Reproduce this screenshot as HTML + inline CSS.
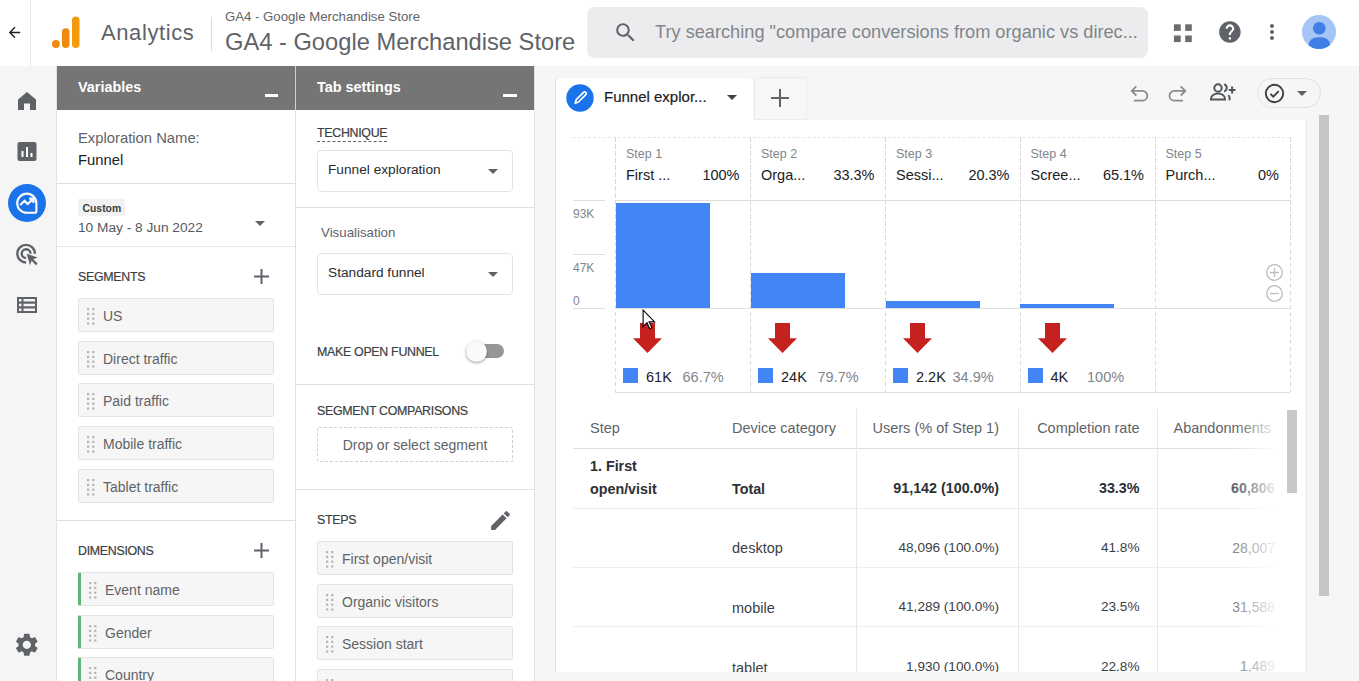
<!DOCTYPE html>
<html><head><meta charset="utf-8">
<style>
*{box-sizing:border-box;margin:0;padding:0}
html,body{width:1359px;height:681px;overflow:hidden;background:#fff;font-family:"Liberation Sans",sans-serif;color:#202124}
.a{position:absolute}
svg{display:block}
/* header */
#hdr{left:0;top:0;width:1359px;height:66px;background:#fff}
#rail{left:0;top:66px;width:57px;height:615px;background:#f5f5f5;border-right:1px solid #e3e3e3}
.ph{background:#757575;color:#fff;font-weight:bold;font-size:14.4px;height:44px;top:66px}
.panel{top:66px;height:615px;background:#fff}
.lbl{font-size:12.4px;color:#3c4043;letter-spacing:-0.3px;-webkit-text-stroke:0.2px #3c4043}
.chip{background:#f6f6f6;border:1px solid #e3e3e3;border-radius:2px;height:34px;font-size:14px;color:#5f6368}
.grip{position:absolute;left:8.1px;top:8.5px}
.sel{border:1px solid #e3e3e3;border-radius:4px;height:42px;font-size:13.7px;color:#2a2c30;background:#fff}
.tri{width:0;height:0;border-left:5px solid transparent;border-right:5px solid transparent;border-top:5px solid #5f6368}
#canvas{left:535px;top:66px;width:824px;height:615px;background:#f6f6f6}
</style></head><body>
<!-- HEADER -->
<div id="hdr" class="a">
  <div class="a" style="left:30px;top:0;width:1px;height:66px;background:#e8eaed"></div>
  <svg class="a" style="left:6px;top:24px" width="17" height="17" viewBox="0 0 24 24"><path d="M20 11H7.83l5.59-5.59L12 4l-8 8 8 8 1.41-1.41L7.83 13H20v-2z" fill="#202124"/></svg>
  <svg class="a" style="left:52px;top:16px" width="28" height="32" viewBox="0 0 28 32">
    <rect x="20" y="0.5" width="7.5" height="31.5" rx="3.75" fill="#f39a0b"/>
    <rect x="10" y="12.3" width="7.5" height="19.7" rx="3.75" fill="#ee8a0e"/>
    <circle cx="3.9" cy="28" r="3.9" fill="#ee8a0e"/>
  </svg>
  <div class="a" style="left:101px;top:20px;font-size:22px;color:#5f6368;letter-spacing:0.6px">Analytics</div>
  <div class="a" style="left:211px;top:17px;width:1px;height:34px;background:#dadce0"></div>
  <div class="a" style="left:225px;top:9px;font-size:13.2px;color:#5f6368">GA4 - Google Merchandise Store</div>
  <div class="a" style="left:225px;top:29.3px;font-size:23.7px;color:#5f6368">GA4 - Google Merchandise Store</div>
  <div class="a" style="left:587px;top:7px;width:561px;height:51px;background:#ececee;border-radius:8px"></div>
  <svg class="a" style="left:612.5px;top:19.8px" width="25.2" height="25.2" viewBox="0 0 24 24"><path d="M15.5 14h-.79l-.28-.27A6.47 6.47 0 0 0 16 9.5 6.5 6.5 0 1 0 9.5 16c1.61 0 3.09-.59 4.23-1.57l.27.28v.79l5 4.99L20.49 19l-4.99-5zm-6 0C7.01 14 5 11.99 5 9.5S7.01 5 9.5 5 14 7.01 14 9.5 11.99 14 9.5 14z" fill="#5f6368"/></svg>
  <div class="a" style="left:655px;top:21.5px;font-size:18.2px;color:#80868b;white-space:nowrap">Try searching "compare conversions from organic vs direc...</div>
  <svg class="a" style="left:1173px;top:23px" width="20" height="20" viewBox="0 0 20 20" fill="#6d6d6d"><rect x="0.9" y="1.3" width="6.8" height="6.6"/><rect x="12.2" y="1.3" width="6.6" height="6.6"/><rect x="0.9" y="12.5" width="6.8" height="6.6"/><rect x="12.2" y="12.5" width="6.6" height="6.6"/></svg>
  <svg class="a" style="left:1216.9px;top:19.1px" width="25.8" height="25.8" viewBox="0 0 24 24"><path d="M12 2C6.48 2 2 6.48 2 12s4.48 10 10 10 10-4.48 10-10S17.52 2 12 2zm1 17h-2v-2h2v2zm2.07-7.75l-.9.92C13.45 12.9 13 13.5 13 15h-2v-.5c0-1.1.45-2.1 1.17-2.83l1.24-1.26c.37-.36.59-.86.59-1.41 0-1.1-.9-2-2-2s-2 .9-2 2H8c0-2.21 1.79-4 4-4s4 1.79 4 4c0 .88-.36 1.68-.93 2.25z" fill="#5f6368"/></svg>
  <svg class="a" style="left:1260px;top:20px" width="24" height="24" viewBox="0 0 24 24"><path d="M12 8c1.1 0 2-.9 2-2s-.9-2-2-2-2 .9-2 2 .9 2 2 2zm0 2c-1.1 0-2 .9-2 2s.9 2 2 2 2-.9 2-2-.9-2-2-2zm0 6c-1.1 0-2 .9-2 2s.9 2 2 2 2-.9 2-2-.9-2-2-2z" fill="#5f6368"/></svg>
  <svg class="a" style="left:1302px;top:15px" width="34" height="34" viewBox="0 0 34 34">
    <defs><clipPath id="avc"><circle cx="17" cy="17" r="17"/></clipPath></defs>
    <circle cx="17" cy="17" r="17" fill="#a6c5f7"/>
    <g clip-path="url(#avc)" fill="#3f7fe6"><circle cx="17.3" cy="13.3" r="6.3"/><rect x="6.6" y="22.2" width="21.6" height="16" rx="9"/></g>
  </svg>
</div>

<!-- RAIL -->
<div id="rail" class="a">
  <svg class="a" style="left:15px;top:23px" width="24" height="24" viewBox="0 0 24 24"><path d="M12 3L3 10.5V21h6v-6.5h6V21h6V10.5z" fill="#5f6368"/></svg>
  <svg class="a" style="left:17px;top:76px" width="20" height="20" viewBox="0 0 20 20"><rect x="0.5" y="0" width="19" height="19" rx="2" fill="#5f6368"/><rect x="4.5" y="9" width="2" height="6" fill="#fff"/><rect x="9" y="5" width="2" height="10" fill="#fff"/><rect x="13.5" y="11" width="2" height="4" fill="#fff"/></svg>
  <svg class="a" style="left:8px;top:118px" width="38" height="38" viewBox="0 0 38 38"><circle cx="19" cy="19" r="19" fill="#1a73e8"/><path d="M18.8 28.8A9.6 9.6 0 1 1 28.4 19.2V27a1.8 1.8 0 0 1-1.8 1.8Z" fill="none" stroke="#fff" stroke-width="2.1"/><path d="M12.2 20.9L16.6 16.8L19.6 20L25.2 14.9M21.2 14.6H25.5V18.9" fill="none" stroke="#fff" stroke-width="2.1"/></svg>
  <svg class="a" style="left:13.8px;top:175px" width="26.4" height="26.4" viewBox="0 0 24 24"><path d="M11 3.5a8 8 0 1 0 0 16" fill="none" stroke="#5f6368" stroke-width="2.2"/><path d="M19 11.5a8 8 0 0 0-8-8" fill="none" stroke="#5f6368" stroke-width="2.2"/><path d="M11 15.5a4 4 0 1 1 4-4" fill="none" stroke="#5f6368" stroke-width="2.2"/><path d="M11.5 11.5l10 3.5-4 1.5 4 4-1.5 1.5-4-4-1.5 4z" fill="#5f6368"/></svg>
  <svg class="a" style="left:17px;top:231px" width="20" height="16" viewBox="0 0 20 16"><path d="M0 0h20v16H0z M2 2v2.5h2.5V2z M6.5 2v2.5H18V2z M2 6.75v2.5h2.5v-2.5z M6.5 6.75v2.5H18v-2.5z M2 11.5V14h2.5v-2.5z M6.5 11.5V14H18v-2.5z" fill="#5f6368" fill-rule="evenodd"/></svg>
  <svg class="a" style="left:13.2px;top:564.5px" width="27.6" height="27.6" viewBox="0 0 24 24"><path d="M19.14 12.94c.04-.3.06-.61.06-.94 0-.32-.02-.64-.07-.94l2.03-1.58a.49.49 0 0 0 .12-.61l-1.92-3.32a.488.488 0 0 0-.59-.22l-2.39.96c-.5-.38-1.03-.7-1.62-.94l-.36-2.54a.484.484 0 0 0-.48-.41h-3.84c-.24 0-.43.17-.47.41l-.36 2.54c-.59.24-1.13.57-1.62.94l-2.39-.96c-.22-.08-.47 0-.59.22L2.74 8.87c-.12.21-.08.47.12.61l2.03 1.58c-.05.3-.09.63-.09.94s.02.64.07.94l-2.03 1.58a.49.49 0 0 0-.12.61l1.92 3.32c.12.22.37.29.59.22l2.39-.96c.5.38 1.03.7 1.62.94l.36 2.54c.05.24.24.41.48.41h3.84c.24 0 .44-.17.47-.41l.36-2.54c.59-.24 1.13-.56 1.62-.94l2.39.96c.22.08.47 0 .59-.22l1.92-3.32c.12-.22.07-.47-.12-.61l-2.01-1.58zM12 15.6c-1.98 0-3.6-1.62-3.6-3.6s1.62-3.6 3.6-3.6 3.6 1.62 3.6 3.6-1.62 3.6-3.6 3.6z" fill="#5f6368"/></svg>
</div>

<!-- PANEL 1 -->
<div class="a panel" style="left:57px;width:239px;border-right:1px solid #e0e0e0">
  <div class="a" style="left:21px;top:64px;font-size:14.8px;color:#5f6368">Exploration Name:</div>
  <div class="a" style="left:21px;top:85.5px;font-size:14.8px;color:#202124">Funnel</div>
  <div class="a" style="left:0;top:117px;width:238px;height:1px;background:#e0e0e0"></div>
  <div class="a" style="left:21px;top:133px;width:47px;height:17px;background:#f1f1f1;font-size:10.4px;font-weight:bold;color:#3c4043;padding:3.5px 0 0 4.5px">Custom</div>
  <div class="a" style="left:21px;top:153.5px;font-size:13.7px;color:#55595e">10 May - 8 Jun 2022</div>
  <div class="a tri" style="left:198px;top:155px"></div>
  <div class="a" style="left:0;top:180px;width:238px;height:1px;background:#e8e8e8"></div>
  <div class="a lbl" style="left:21px;top:204px">SEGMENTS</div>
  <svg class="a" style="left:197px;top:203px" width="15" height="15" viewBox="0 0 15 15"><path d="M7.5 0v15M0 7.5h15" stroke="#5f6368" stroke-width="2"/></svg>
  <div class="a chip" style="left:21px;top:232px;width:196px"><svg class="grip" width="8" height="17" viewBox="0 0 8 17" fill="#b5b5b5"><rect x="0" y="0" width="2.2" height="2.2"/><rect x="0" y="4.8" width="2.2" height="2.2"/><rect x="0" y="9.6" width="2.2" height="2.2"/><rect x="0" y="14.4" width="2.2" height="2.2"/><rect x="5.15" y="0" width="2.2" height="2.2"/><rect x="5.15" y="4.8" width="2.2" height="2.2"/><rect x="5.15" y="9.6" width="2.2" height="2.2"/><rect x="5.15" y="14.4" width="2.2" height="2.2"/></svg><span class="a" style="left:24px;top:9px">US</span></div>
  <div class="a chip" style="left:21px;top:275px;width:196px"><svg class="grip" width="8" height="17" viewBox="0 0 8 17" fill="#b5b5b5"><rect x="0" y="0" width="2.2" height="2.2"/><rect x="0" y="4.8" width="2.2" height="2.2"/><rect x="0" y="9.6" width="2.2" height="2.2"/><rect x="0" y="14.4" width="2.2" height="2.2"/><rect x="5.15" y="0" width="2.2" height="2.2"/><rect x="5.15" y="4.8" width="2.2" height="2.2"/><rect x="5.15" y="9.6" width="2.2" height="2.2"/><rect x="5.15" y="14.4" width="2.2" height="2.2"/></svg><span class="a" style="left:24px;top:9px">Direct traffic</span></div>
  <div class="a chip" style="left:21px;top:317px;width:196px"><svg class="grip" width="8" height="17" viewBox="0 0 8 17" fill="#b5b5b5"><rect x="0" y="0" width="2.2" height="2.2"/><rect x="0" y="4.8" width="2.2" height="2.2"/><rect x="0" y="9.6" width="2.2" height="2.2"/><rect x="0" y="14.4" width="2.2" height="2.2"/><rect x="5.15" y="0" width="2.2" height="2.2"/><rect x="5.15" y="4.8" width="2.2" height="2.2"/><rect x="5.15" y="9.6" width="2.2" height="2.2"/><rect x="5.15" y="14.4" width="2.2" height="2.2"/></svg><span class="a" style="left:24px;top:9px">Paid traffic</span></div>
  <div class="a chip" style="left:21px;top:360px;width:196px"><svg class="grip" width="8" height="17" viewBox="0 0 8 17" fill="#b5b5b5"><rect x="0" y="0" width="2.2" height="2.2"/><rect x="0" y="4.8" width="2.2" height="2.2"/><rect x="0" y="9.6" width="2.2" height="2.2"/><rect x="0" y="14.4" width="2.2" height="2.2"/><rect x="5.15" y="0" width="2.2" height="2.2"/><rect x="5.15" y="4.8" width="2.2" height="2.2"/><rect x="5.15" y="9.6" width="2.2" height="2.2"/><rect x="5.15" y="14.4" width="2.2" height="2.2"/></svg><span class="a" style="left:24px;top:9px">Mobile traffic</span></div>
  <div class="a chip" style="left:21px;top:403px;width:196px"><svg class="grip" width="8" height="17" viewBox="0 0 8 17" fill="#b5b5b5"><rect x="0" y="0" width="2.2" height="2.2"/><rect x="0" y="4.8" width="2.2" height="2.2"/><rect x="0" y="9.6" width="2.2" height="2.2"/><rect x="0" y="14.4" width="2.2" height="2.2"/><rect x="5.15" y="0" width="2.2" height="2.2"/><rect x="5.15" y="4.8" width="2.2" height="2.2"/><rect x="5.15" y="9.6" width="2.2" height="2.2"/><rect x="5.15" y="14.4" width="2.2" height="2.2"/></svg><span class="a" style="left:24px;top:9px">Tablet traffic</span></div>
  <div class="a" style="left:0;top:454px;width:238px;height:1px;background:#e0e0e0"></div>
  <div class="a lbl" style="left:21px;top:478px">DIMENSIONS</div>
  <svg class="a" style="left:197px;top:477px" width="15" height="15" viewBox="0 0 15 15"><path d="M7.5 0v15M0 7.5h15" stroke="#5f6368" stroke-width="2"/></svg>
  <div class="a chip" style="left:21px;top:506px;width:196px;border-left:3px solid #5bb974"><svg class="grip" width="8" height="17" viewBox="0 0 8 17" fill="#b5b5b5"><rect x="0" y="0" width="2.2" height="2.2"/><rect x="0" y="4.8" width="2.2" height="2.2"/><rect x="0" y="9.6" width="2.2" height="2.2"/><rect x="0" y="14.4" width="2.2" height="2.2"/><rect x="5.15" y="0" width="2.2" height="2.2"/><rect x="5.15" y="4.8" width="2.2" height="2.2"/><rect x="5.15" y="9.6" width="2.2" height="2.2"/><rect x="5.15" y="14.4" width="2.2" height="2.2"/></svg><span class="a" style="left:24px;top:9px">Event name</span></div>
  <div class="a chip" style="left:21px;top:549px;width:196px;border-left:3px solid #5bb974"><svg class="grip" width="8" height="17" viewBox="0 0 8 17" fill="#b5b5b5"><rect x="0" y="0" width="2.2" height="2.2"/><rect x="0" y="4.8" width="2.2" height="2.2"/><rect x="0" y="9.6" width="2.2" height="2.2"/><rect x="0" y="14.4" width="2.2" height="2.2"/><rect x="5.15" y="0" width="2.2" height="2.2"/><rect x="5.15" y="4.8" width="2.2" height="2.2"/><rect x="5.15" y="9.6" width="2.2" height="2.2"/><rect x="5.15" y="14.4" width="2.2" height="2.2"/></svg><span class="a" style="left:24px;top:9px">Gender</span></div>
  <div class="a chip" style="left:21px;top:591px;width:196px;border-left:3px solid #5bb974"><svg class="grip" width="8" height="17" viewBox="0 0 8 17" fill="#b5b5b5"><rect x="0" y="0" width="2.2" height="2.2"/><rect x="0" y="4.8" width="2.2" height="2.2"/><rect x="0" y="9.6" width="2.2" height="2.2"/><rect x="0" y="14.4" width="2.2" height="2.2"/><rect x="5.15" y="0" width="2.2" height="2.2"/><rect x="5.15" y="4.8" width="2.2" height="2.2"/><rect x="5.15" y="9.6" width="2.2" height="2.2"/><rect x="5.15" y="14.4" width="2.2" height="2.2"/></svg><span class="a" style="left:24px;top:9px">Country</span></div>
</div>
<div class="a ph" style="left:57px;width:238px"><span class="a" style="left:21px;top:13px">Variables</span><div class="a" style="left:208px;top:27.5px;width:13px;height:3.5px;background:#fff"></div></div>

<div class="a" style="left:295px;top:66px;width:1px;height:44px;background:#d0d0d0"></div>
<!-- PANEL 2 -->
<div class="a panel" style="left:296px;width:239px;border-right:1px solid #e0e0e0">
  <div class="a lbl" style="left:21px;top:60px">TECHNIQUE</div>
  <div class="a" style="left:21px;top:75px;width:70px;height:0;border-top:1px dashed #5f6368"></div>
  <div class="a sel" style="left:21px;top:84px;width:196px"><span class="a" style="left:10px;top:11px">Funnel exploration</span><div class="a tri" style="left:170px;top:18px"></div></div>
  <div class="a" style="left:0;top:141px;width:238px;height:1px;background:#e0e0e0"></div>
  <div class="a" style="left:25px;top:159.2px;font-size:13.3px;color:#5f6368">Visualisation</div>
  <div class="a sel" style="left:21px;top:186.5px;width:196px;height:42.5px"><span class="a" style="left:10px;top:11.5px">Standard funnel</span><div class="a tri" style="left:170px;top:18px"></div></div>
  <div class="a lbl" style="left:21px;top:279px">MAKE OPEN FUNNEL</div>
  <div class="a" style="left:172px;top:278px;width:36px;height:14px;border-radius:7px;background:#979797"></div>
  <div class="a" style="left:170px;top:274.5px;width:21px;height:21px;border-radius:50%;background:#fafafa;box-shadow:0 1px 3px rgba(0,0,0,.4)"></div>
  <div class="a" style="left:0;top:318px;width:238px;height:1px;background:#e0e0e0"></div>
  <div class="a lbl" style="left:21px;top:338px">SEGMENT COMPARISONS</div>
  <div class="a" style="left:21px;top:361px;width:196px;height:35px;border:1px dashed #cfcfcf;border-radius:2px;font-size:14px;color:#5f6368;text-align:center;padding-top:9px">Drop or select segment</div>
  <div class="a" style="left:0;top:423px;width:238px;height:1px;background:#e0e0e0"></div>
  <div class="a lbl" style="left:21px;top:447px">STEPS</div>
  <svg class="a" style="left:191.5px;top:441.5px" width="25" height="25" viewBox="0 0 24 24"><path d="M3 17.25V21h3.75L17.81 9.94l-3.75-3.75L3 17.25zM20.71 7.04a.996.996 0 0 0 0-1.41l-2.34-2.34a.996.996 0 0 0-1.41 0l-1.83 1.83 3.75 3.75 1.83-1.83z" fill="#5f6368"/></svg>
  <div class="a chip" style="left:21px;top:475px;width:196px"><svg class="grip" width="8" height="17" viewBox="0 0 8 17" fill="#b5b5b5"><rect x="0" y="0" width="2.2" height="2.2"/><rect x="0" y="4.8" width="2.2" height="2.2"/><rect x="0" y="9.6" width="2.2" height="2.2"/><rect x="0" y="14.4" width="2.2" height="2.2"/><rect x="5.15" y="0" width="2.2" height="2.2"/><rect x="5.15" y="4.8" width="2.2" height="2.2"/><rect x="5.15" y="9.6" width="2.2" height="2.2"/><rect x="5.15" y="14.4" width="2.2" height="2.2"/></svg><span class="a" style="left:24px;top:9px">First open/visit</span></div>
  <div class="a chip" style="left:21px;top:518px;width:196px"><svg class="grip" width="8" height="17" viewBox="0 0 8 17" fill="#b5b5b5"><rect x="0" y="0" width="2.2" height="2.2"/><rect x="0" y="4.8" width="2.2" height="2.2"/><rect x="0" y="9.6" width="2.2" height="2.2"/><rect x="0" y="14.4" width="2.2" height="2.2"/><rect x="5.15" y="0" width="2.2" height="2.2"/><rect x="5.15" y="4.8" width="2.2" height="2.2"/><rect x="5.15" y="9.6" width="2.2" height="2.2"/><rect x="5.15" y="14.4" width="2.2" height="2.2"/></svg><span class="a" style="left:24px;top:9px">Organic visitors</span></div>
  <div class="a chip" style="left:21px;top:560px;width:196px"><svg class="grip" width="8" height="17" viewBox="0 0 8 17" fill="#b5b5b5"><rect x="0" y="0" width="2.2" height="2.2"/><rect x="0" y="4.8" width="2.2" height="2.2"/><rect x="0" y="9.6" width="2.2" height="2.2"/><rect x="0" y="14.4" width="2.2" height="2.2"/><rect x="5.15" y="0" width="2.2" height="2.2"/><rect x="5.15" y="4.8" width="2.2" height="2.2"/><rect x="5.15" y="9.6" width="2.2" height="2.2"/><rect x="5.15" y="14.4" width="2.2" height="2.2"/></svg><span class="a" style="left:24px;top:9px">Session start</span></div>
  <div class="a chip" style="left:21px;top:603px;width:196px"><svg class="grip" width="8" height="17" viewBox="0 0 8 17" fill="#b5b5b5"><rect x="0" y="0" width="2.2" height="2.2"/><rect x="0" y="4.8" width="2.2" height="2.2"/><rect x="0" y="9.6" width="2.2" height="2.2"/><rect x="0" y="14.4" width="2.2" height="2.2"/><rect x="5.15" y="0" width="2.2" height="2.2"/><rect x="5.15" y="4.8" width="2.2" height="2.2"/><rect x="5.15" y="9.6" width="2.2" height="2.2"/><rect x="5.15" y="14.4" width="2.2" height="2.2"/></svg></div>
</div>
<div class="a ph" style="left:296px;width:238px"><span class="a" style="left:21px;top:13px">Tab settings</span><div class="a" style="left:207px;top:27.5px;width:14px;height:3.5px;background:#fff"></div></div>

<!-- CANVAS -->
<div id="canvas" class="a">
<div class="a" style="left:20px;top:11px;width:198px;height:45px;background:#fff;border-radius:5px 5px 0 0;border-left:1px solid #e3e3e3;border-top:1px solid #f0f0f0"></div>
<div class="a" style="left:219px;top:11px;width:53px;height:43px;background:#f7f7f7;border:1px solid #ebebeb;border-radius:4px 4px 0 0"></div>
<svg class="a" style="left:31px;top:18px" width="28" height="28" viewBox="0 0 28 28"><circle cx="14" cy="14" r="13.7" fill="#1a73e8"/><path d="M9.2 19.3l1-3.6 7.3-7.3a1.6 1.6 0 0 1 2.3 2.3l-7.3 7.3z" fill="none" stroke="#fff" stroke-width="1.7" stroke-linejoin="round"/></svg>
<div class="a" style="left:69px;top:22px;font-size:15px;color:#202124;white-space:nowrap;-webkit-text-stroke:0.2px #202124">Funnel explor...</div>
<div class="a tri" style="left:192px;top:29px;border-top-color:#3c4043"></div>
<svg class="a" style="left:236px;top:23px" width="18" height="18" viewBox="0 0 18 18"><path d="M9 0v18M0 9h18" stroke="#5f6368" stroke-width="2"/></svg>
<svg class="a" style="left:590px;top:14px" width="115" height="26" viewBox="1125 80 115 26" fill="none" stroke-width="1.8">
<path d="M1136.3 86.3L1131.7 90.9L1136.3 95.5M1131.7 90.9H1142.5A4.85 4.85 0 0 1 1142.5 100.6H1134" stroke="#888c90"/>
<path d="M1180.7 86.3L1185.3 90.9L1180.7 95.5M1185.3 90.9H1174.3A4.85 4.85 0 0 0 1174.3 100.6H1183" stroke="#888c90"/>
<g stroke="#50555b" stroke-width="2"><circle cx="1218" cy="88" r="3.7"/><path d="M1211 99.6v-0.8c0-3.1 3.2-5.3 7-5.3s7 2.2 7 5.3v0.8z"/><path d="M1224.2 84.2a3.9 3.9 0 0 1 0 7.3"/><path d="M1228.3 95.2c0.8 0.6 1.3 1.6 1.3 2.8v2.3"/><path d="M1232.1 86.6v6.8M1228.7 90h6.8"/></g>
</svg>
<div class="a" style="left:722px;top:12px;width:64px;height:30px;border:1px solid #e0e0e0;border-radius:15px"></div>
<svg class="a" style="left:729px;top:17px" width="21" height="21" viewBox="0 0 21 21"><circle cx="10.5" cy="10.5" r="8.7" fill="none" stroke="#3c4043" stroke-width="1.9"/><path d="M6.5 10.8l2.8 2.8 5.4-5.4" fill="none" stroke="#3c4043" stroke-width="1.9"/></svg>
<div class="a tri" style="left:762px;top:25px"></div>
<div class="a" style="left:20px;top:54px;width:752px;height:552px;background:#fff;border-left:1px solid #e3e3e3;border-right:1px solid #e9e9e9"></div>
<div class="a" style="left:784px;top:49px;width:10px;height:481px;background:#c5c5c7"></div>
<div class="a" style="left:38px;top:71px;width:717px;height:0;border-top:1px dashed #e6e6e6"></div>
<div class="a" style="left:80px;top:134px;width:675px;height:1px;background:#dcdcdc"></div>
<div class="a" style="left:80px;top:242px;width:675px;height:1px;background:#e0e0e0"></div>
<div class="a" style="left:80px;top:326px;width:675px;height:1px;background:#e0e0e0"></div>
<div class="a" style="left:38px;top:134px;width:32px;height:1px;background:#e0e0e0"></div>
<div class="a" style="left:38px;top:188px;width:32px;height:1px;background:#e0e0e0"></div>
<div class="a" style="left:38px;top:242px;width:32px;height:1px;background:#e0e0e0"></div>
<div class="a" style="left:38px;top:140.5px;font-size:12px;color:#80868b">93K</div>
<div class="a" style="left:38px;top:194.5px;font-size:12px;color:#80868b">47K</div>
<div class="a" style="left:38px;top:227.5px;font-size:12px;color:#80868b">0</div>
<div class="a" style="left:80px;top:71px;width:1px;height:255px;background:repeating-linear-gradient(to bottom,#d9d9d9 0 4.5px,transparent 4.5px 7px)"></div>
<div class="a" style="left:215px;top:71px;width:1px;height:255px;background:repeating-linear-gradient(to bottom,#d9d9d9 0 4.5px,transparent 4.5px 7px)"></div>
<div class="a" style="left:350px;top:71px;width:1px;height:255px;background:repeating-linear-gradient(to bottom,#d9d9d9 0 4.5px,transparent 4.5px 7px)"></div>
<div class="a" style="left:485px;top:71px;width:1px;height:255px;background:repeating-linear-gradient(to bottom,#d9d9d9 0 4.5px,transparent 4.5px 7px)"></div>
<div class="a" style="left:620px;top:71px;width:1px;height:255px;background:repeating-linear-gradient(to bottom,#d9d9d9 0 4.5px,transparent 4.5px 7px)"></div>
<div class="a" style="left:755px;top:71px;width:1px;height:255px;background:repeating-linear-gradient(to bottom,#d9d9d9 0 4.5px,transparent 4.5px 7px)"></div>
<div class="a" style="left:91.0px;top:80.5px;font-size:12.5px;color:#80868b">Step 1</div>
<div class="a" style="left:91.0px;top:101px;font-size:14.5px;color:#202124">First ...</div>
<div class="a" style="left:80.5px;top:101px;width:124px;text-align:right;font-size:14.5px;color:#202124">100%</div>
<div class="a" style="left:80.5px;top:137px;width:94px;height:105px;background:#4285f4"></div>
<svg class="a" style="left:98.0px;top:257px" width="29" height="30" viewBox="0 0 29 30"><path d="M7 0h15v15.3h7L14.5 30 0 15.3h7z" fill="#c5221f"/></svg>
<div class="a" style="left:88.0px;top:302px;width:15px;height:15px;background:#4285f4"></div>
<div class="a" style="left:111.0px;top:303px;font-size:14.5px;color:#202124">61K</div>
<div class="a" style="left:147.5px;top:303px;font-size:14.5px;color:#80868b">66.7%</div>
<div class="a" style="left:226.0px;top:80.5px;font-size:12.5px;color:#80868b">Step 2</div>
<div class="a" style="left:226.0px;top:101px;font-size:14.5px;color:#202124">Orga...</div>
<div class="a" style="left:215.5px;top:101px;width:124px;text-align:right;font-size:14.5px;color:#202124">33.3%</div>
<div class="a" style="left:215.5px;top:206.8px;width:94px;height:35.19999999999999px;background:#4285f4"></div>
<svg class="a" style="left:233.0px;top:257px" width="29" height="30" viewBox="0 0 29 30"><path d="M7 0h15v15.3h7L14.5 30 0 15.3h7z" fill="#c5221f"/></svg>
<div class="a" style="left:223.0px;top:302px;width:15px;height:15px;background:#4285f4"></div>
<div class="a" style="left:246.0px;top:303px;font-size:14.5px;color:#202124">24K</div>
<div class="a" style="left:282.5px;top:303px;font-size:14.5px;color:#80868b">79.7%</div>
<div class="a" style="left:361.0px;top:80.5px;font-size:12.5px;color:#80868b">Step 3</div>
<div class="a" style="left:361.0px;top:101px;font-size:14.5px;color:#202124">Sessi...</div>
<div class="a" style="left:350.5px;top:101px;width:124px;text-align:right;font-size:14.5px;color:#202124">20.3%</div>
<div class="a" style="left:350.5px;top:235px;width:94px;height:7px;background:#4285f4"></div>
<svg class="a" style="left:368.0px;top:257px" width="29" height="30" viewBox="0 0 29 30"><path d="M7 0h15v15.3h7L14.5 30 0 15.3h7z" fill="#c5221f"/></svg>
<div class="a" style="left:358.0px;top:302px;width:15px;height:15px;background:#4285f4"></div>
<div class="a" style="left:381.0px;top:303px;font-size:14.5px;color:#202124">2.2K</div>
<div class="a" style="left:417.5px;top:303px;font-size:14.5px;color:#80868b">34.9%</div>
<div class="a" style="left:495.5px;top:80.5px;font-size:12.5px;color:#80868b">Step 4</div>
<div class="a" style="left:495.5px;top:101px;font-size:14.5px;color:#202124">Scree...</div>
<div class="a" style="left:485px;top:101px;width:124px;text-align:right;font-size:14.5px;color:#202124">65.1%</div>
<div class="a" style="left:485px;top:237.8px;width:94px;height:4.199999999999989px;background:#4285f4"></div>
<svg class="a" style="left:502.5px;top:257px" width="29" height="30" viewBox="0 0 29 30"><path d="M7 0h15v15.3h7L14.5 30 0 15.3h7z" fill="#c5221f"/></svg>
<div class="a" style="left:492.5px;top:302px;width:15px;height:15px;background:#4285f4"></div>
<div class="a" style="left:515.5px;top:303px;font-size:14.5px;color:#202124">4K</div>
<div class="a" style="left:552px;top:303px;font-size:14.5px;color:#80868b">100%</div>
<div class="a" style="left:630.5px;top:80.5px;font-size:12.5px;color:#80868b">Step 5</div>
<div class="a" style="left:630.5px;top:101px;font-size:14.5px;color:#202124">Purch...</div>
<div class="a" style="left:620px;top:101px;width:124px;text-align:right;font-size:14.5px;color:#202124">0%</div>
<svg class="a" style="left:730px;top:197px" width="19" height="40" viewBox="0 0 19 40"><circle cx="9.5" cy="9.5" r="7.8" fill="none" stroke="#bdbdbd" stroke-width="1.3"/><path d="M9.5 5v9M5 9.5h9" stroke="#bdbdbd" stroke-width="1.3"/><circle cx="9.5" cy="30.5" r="7.8" fill="none" stroke="#bdbdbd" stroke-width="1.3"/><path d="M5 30.5h9" stroke="#bdbdbd" stroke-width="1.3"/></svg>
<svg class="a" style="left:107px;top:243px" width="15.4" height="22" viewBox="0 0 14 20"><path d="M1 1v15l3.5-3.5 2.5 5.5 2-1-2.5-5.3h5z" fill="#fff" stroke="#000" stroke-width="1"/></svg>
<div class="a" style="left:38px;top:382px;width:707px;height:1px;background:#e0e0e0"></div>
<div class="a" style="left:38px;top:442px;width:707px;height:1px;background:#eeeeee"></div>
<div class="a" style="left:38px;top:501px;width:707px;height:1px;background:#eeeeee"></div>
<div class="a" style="left:38px;top:560px;width:707px;height:1px;background:#eeeeee"></div>
<div class="a" style="left:321px;top:343px;width:1px;height:263px;background:#e8e8e8"></div>
<div class="a" style="left:483px;top:343px;width:1px;height:263px;background:#e8e8e8"></div>
<div class="a" style="left:622px;top:343px;width:1px;height:263px;background:#e8e8e8"></div>
<div class="a" style="left:55px;top:354px;font-size:14.5px;white-space:nowrap;color:#5f6368">Step</div>
<div class="a" style="left:197px;top:354px;font-size:14.5px;white-space:nowrap;color:#5f6368">Device category</div>
<div class="a" style="left:264px;top:354px;width:200px;text-align:right;font-size:14.5px;white-space:nowrap;color:#5f6368">Users (% of Step 1)</div>
<div class="a" style="left:404.5px;top:354px;width:200px;text-align:right;font-size:14.5px;white-space:nowrap;color:#5f6368">Completion rate</div>
<div class="a" style="left:638.5px;top:354px;font-size:14.5px;white-space:nowrap;color:#5f6368">Abandonments</div>
<div class="a" style="left:55px;top:391.5px;font-size:14.5px;white-space:nowrap;font-weight:bold;color:#2d2f33;font-size:14.3px">1. First</div>
<div class="a" style="left:55px;top:414.7px;font-size:14.5px;white-space:nowrap;font-weight:bold;color:#2d2f33;font-size:14.3px">open/visit</div>
<div class="a" style="left:197px;top:414.7px;font-size:14.5px;white-space:nowrap;font-weight:bold;color:#2d2f33;font-size:14.3px">Total</div>
<div class="a" style="left:264px;top:414px;width:200px;text-align:right;font-size:14.5px;white-space:nowrap;font-weight:bold;color:#2d2f33;font-size:14.3px">91,142 (100.0%)</div>
<div class="a" style="left:404.5px;top:414px;width:200px;text-align:right;font-size:14.5px;white-space:nowrap;font-weight:bold;color:#2d2f33;font-size:14.3px">33.3%</div>
<div class="a" style="left:696px;top:414px;font-size:14.5px;white-space:nowrap;font-weight:bold;color:#2d2f33;font-size:14.3px;color:#5f6368">60,806</div>
<div class="a" style="left:197px;top:473.5px;font-size:14.5px;white-space:nowrap;color:#3c4043;font-size:14px;font-size:14.5px">desktop</div>
<div class="a" style="left:264px;top:473.5px;width:200px;text-align:right;font-size:14.5px;white-space:nowrap;color:#3c4043;font-size:13.6px;padding-top:0.5px">48,096 (100.0%)</div>
<div class="a" style="left:404.5px;top:473.5px;width:200px;text-align:right;font-size:14.5px;white-space:nowrap;color:#3c4043;font-size:13.6px;padding-top:0.5px">41.8%</div>
<div class="a" style="left:540px;top:473.5px;width:200px;text-align:right;font-size:14.5px;white-space:nowrap;color:#80868b;font-size:14px">28,007</div>
<div class="a" style="left:197px;top:533.5px;font-size:14.5px;white-space:nowrap;color:#3c4043;font-size:14px;font-size:14.5px">mobile</div>
<div class="a" style="left:264px;top:532.5px;width:200px;text-align:right;font-size:14.5px;white-space:nowrap;color:#3c4043;font-size:13.6px;padding-top:0.5px">41,289 (100.0%)</div>
<div class="a" style="left:404.5px;top:532.5px;width:200px;text-align:right;font-size:14.5px;white-space:nowrap;color:#3c4043;font-size:13.6px;padding-top:0.5px">23.5%</div>
<div class="a" style="left:540px;top:532.5px;width:200px;text-align:right;font-size:14.5px;white-space:nowrap;color:#80868b;font-size:14px">31,588</div>
<div class="a" style="left:197px;top:593.5px;font-size:14.5px;white-space:nowrap;color:#3c4043;font-size:14px;font-size:14.5px">tablet</div>
<div class="a" style="left:264px;top:592px;width:200px;text-align:right;font-size:14.5px;white-space:nowrap;color:#3c4043;font-size:13.6px;padding-top:0.5px">1,930 (100.0%)</div>
<div class="a" style="left:404.5px;top:592px;width:200px;text-align:right;font-size:14.5px;white-space:nowrap;color:#3c4043;font-size:13.6px;padding-top:0.5px">22.8%</div>
<div class="a" style="left:540px;top:592px;width:200px;text-align:right;font-size:14.5px;white-space:nowrap;color:#80868b;font-size:14px">1,489</div>
<div class="a" style="left:700px;top:343px;width:45px;height:263px;background:linear-gradient(to right,rgba(255,255,255,0),#fff)"></div>
<div class="a" style="left:752px;top:344px;width:10px;height:83px;background:#c8c8c8"></div>
<div class="a" style="left:0;top:606px;width:824px;height:9px;background:#f6f6f6"></div>
</div>

</body></html>
